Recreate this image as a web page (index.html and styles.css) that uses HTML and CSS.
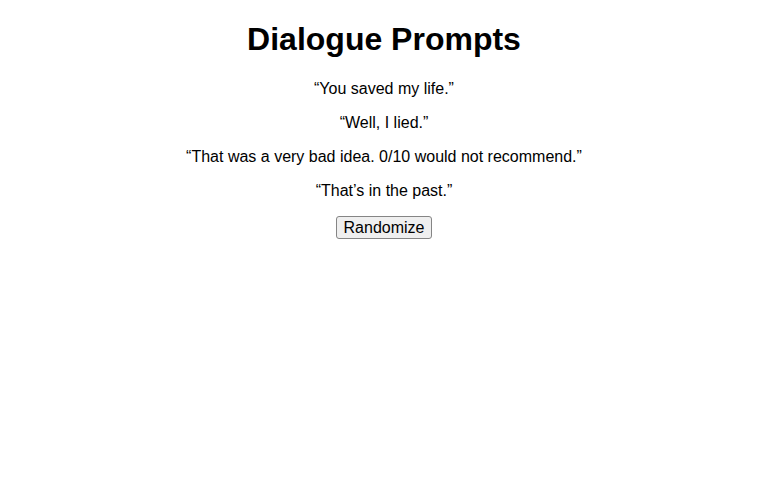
FILE: index.html
```html
<!DOCTYPE html>
<html lang="en">
<head>
<meta charset="utf-8">
<title>Dialogue Prompts</title>
<link rel="stylesheet" href="styles.css">
</head>
<body>
<main class="prompts">
  <h1 class="prompts-title">Dialogue Prompts</h1>
  <p class="prompt">“You saved my life.”</p>
  <p class="prompt">“Well, I lied.”</p>
  <p class="prompt">“That was a very bad idea. 0/10 would not recommend.”</p>
  <p class="prompt">“That’s in the past.”</p>
  <div class="actions">
    <button type="button" class="randomize">Randomize</button>
  </div>
</main>
</body>
</html>
```

FILE: styles.css
```css
body {
  margin: 0;
  padding: 0 8px;
  font-family: "Liberation Sans", Arial, sans-serif;
  color: #000;
  background: #fff;
}

.prompts {
  text-align: center;
}

.prompts-title {
  font-size: 32px;
  font-weight: bold;
  margin: 21.44px 0;
}

.prompt {
  font-size: 16px;
  margin: 16px 0;
}

.actions {
  margin: 16px 0;
}

.randomize {
  font-family: "Liberation Sans", Arial, sans-serif;
  font-size: 16px;
  line-height: 19px;
  color: #000;
  background: #efefef;
  border: 1px solid #858585;
  border-radius: 3px;
  padding: 1px 7px;
}
```
